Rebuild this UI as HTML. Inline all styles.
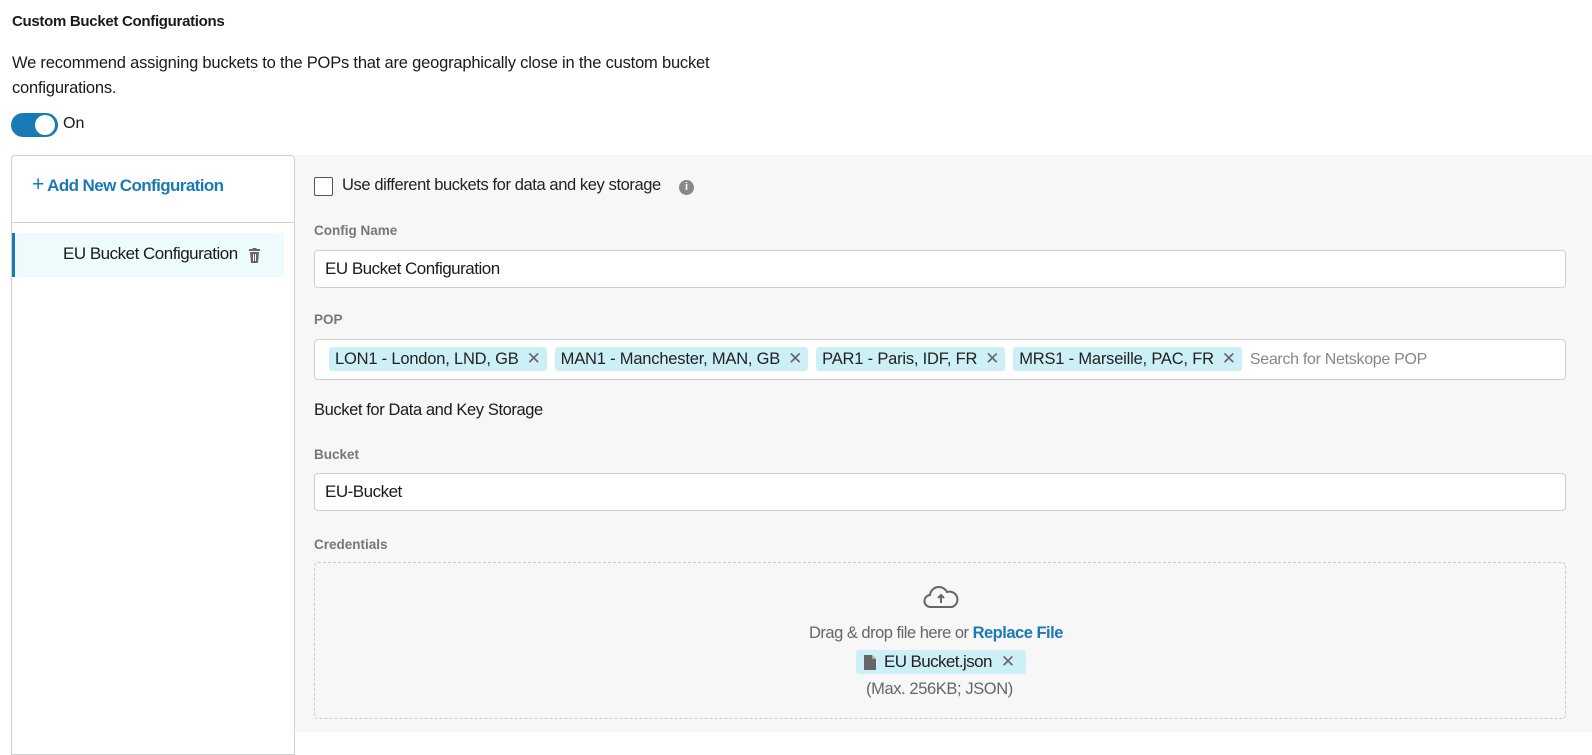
<!DOCTYPE html>
<html><head><style>
*{box-sizing:border-box;margin:0;padding:0}
body{width:1592px;height:732px;overflow:hidden;background:#fff;font-family:"Liberation Sans",sans-serif;color:#1a1a1a;position:relative}
.a{position:absolute;white-space:nowrap}
.inp{position:absolute;left:314px;width:1252px;background:#fff;border:1px solid #cfcfcf;border-radius:4px}
.lbl{position:absolute;left:314px;font-size:13.5px;font-weight:bold;color:#777}
.chip{display:inline-block;background:#cdeff6;border-radius:3px;padding:0 6px;height:24px;line-height:24px;font-size:16.5px;margin-right:8px;color:#222;letter-spacing:-0.2px}
.x{color:#666;font-size:17px;margin-left:8px}
</style></head><body>
<div class="a" style="left:12px;top:13px;font-size:15px;font-weight:bold;letter-spacing:-0.3px">Custom Bucket Configurations</div>
<div class="a" style="left:12px;top:51px;font-size:16.5px;line-height:25px;white-space:normal;width:720px;letter-spacing:-0.2px">We recommend assigning buckets to the POPs that are geographically close in the custom bucket configurations.</div>
<div class="a" style="left:11px;top:113px;width:47px;height:24px;border-radius:12px;background:#1a7ab5"></div>
<div class="a" style="left:35px;top:115px;width:20px;height:20px;border-radius:10px;background:#fff"></div>
<div class="a" style="left:63px;top:115px;font-size:16px">On</div>
<div class="a" style="left:11px;top:155px;width:284px;height:600px;border:1px solid #d0d0d0;border-radius:4px 4px 0 0;background:#fff"></div>
<div class="a" style="left:12px;top:222px;width:282px;height:1px;background:#d0d0d0"></div>
<div class="a" style="left:32px;top:176px;font-size:17px;font-weight:bold;color:#1a7ab5;letter-spacing:-0.6px"><span style="font-weight:normal;font-size:21px;line-height:18px">+</span> Add New Configuration</div>
<div class="a" style="left:12px;top:233px;width:272px;height:44px;background:#eefbfd;border-left:3px solid #1a7ab5"></div>
<div class="a" style="left:63px;top:244px;font-size:17px;letter-spacing:-0.5px">EU Bucket Configuration</div>
<svg class="a" style="left:248px;top:248px" width="13" height="15" viewBox="0 0 13 15"><rect x="1" y="1" width="11" height="2" fill="#666"/><rect x="4.5" y="0" width="4" height="2" fill="#666"/><path d="M2 4h9l-1 11H3z" fill="#666"/><rect x="5" y="6" width="1" height="7" fill="#fff"/><rect x="7" y="6" width="1" height="7" fill="#fff"/></svg>
<div class="a" style="left:295px;top:155px;width:1297px;height:577px;background:#f7f7f7"></div>
<div class="a" style="left:314px;top:177px;width:19px;height:19px;border:1.5px solid #555;border-radius:2px;background:#fff"></div>
<div class="a" style="left:342px;top:176px;font-size:16.5px;color:#222;letter-spacing:-0.4px">Use different buckets for data and key storage</div>
<div class="a" style="left:679px;top:180px;width:15px;height:15px;border-radius:8px;background:#888;color:#fff;font-size:11px;font-weight:bold;text-align:center;line-height:15px">i</div>
<div class="lbl" style="top:223px">Config Name</div>
<div class="inp" style="top:250px;height:38px"></div>
<div class="a" style="left:325px;top:259px;font-size:17px;letter-spacing:-0.5px">EU Bucket Configuration</div>
<div class="lbl" style="top:312px">POP</div>
<div class="inp" style="top:339px;height:41px"></div>
<div class="a" style="left:329px;top:347px"><span class="chip">LON1 - London, LND, GB<span class="x">✕</span></span><span class="chip">MAN1 - Manchester, MAN, GB<span class="x">✕</span></span><span class="chip">PAR1 - Paris, IDF, FR<span class="x">✕</span></span><span class="chip">MRS1 - Marseille, PAC, FR<span class="x">✕</span></span><span style="font-size:16px;color:#888;letter-spacing:-0.3px">Search for Netskope POP</span></div>
<div class="a" style="left:314px;top:401px;font-size:16.5px;letter-spacing:-0.4px">Bucket for Data and Key Storage</div>
<div class="lbl" style="top:447px">Bucket</div>
<div class="inp" style="top:473px;height:38px"></div>
<div class="a" style="left:325px;top:482px;font-size:17px;letter-spacing:-0.5px">EU-Bucket</div>
<div class="lbl" style="top:537px">Credentials</div>
<div class="a" style="left:314px;top:562px;width:1252px;height:157px;border:1px dashed #ccc;border-radius:4px"></div>
<svg class="a" style="left:922px;top:585px" width="38" height="26" viewBox="0 0 38 26"><path d="M9 22a6 6 0 0 1-1-12 9 9 0 0 1 17-3 7 7 0 0 1 5 15z" fill="none" stroke="#666" stroke-width="2"/><path d="M19 18v-8M16 13l3-3 3 3" fill="none" stroke="#666" stroke-width="2"/></svg>
<div class="a" style="left:809px;top:624px;font-size:16.5px;color:#666;letter-spacing:-0.5px">Drag &amp; drop file here or <b style="color:#1a7ab5">Replace File</b></div>
<div class="a" style="left:856px;top:650px;width:170px;height:24px;background:#cdeff6;border-radius:3px"></div>
<svg class="a" style="left:864px;top:655px" width="12" height="15" viewBox="0 0 12 15"><path d="M0 0h8l4 4v11H0z" fill="#666"/><path d="M8 0v4h4" fill="#aaa"/></svg>
<div class="a" style="left:884px;top:652px;font-size:17px;color:#222;letter-spacing:-0.6px">EU Bucket.json<span class="x" style="margin-left:9px">✕</span></div>
<div class="a" style="left:866px;top:680px;font-size:16.5px;color:#666;letter-spacing:-0.4px">(Max. 256KB; JSON)</div>
</body></html>
